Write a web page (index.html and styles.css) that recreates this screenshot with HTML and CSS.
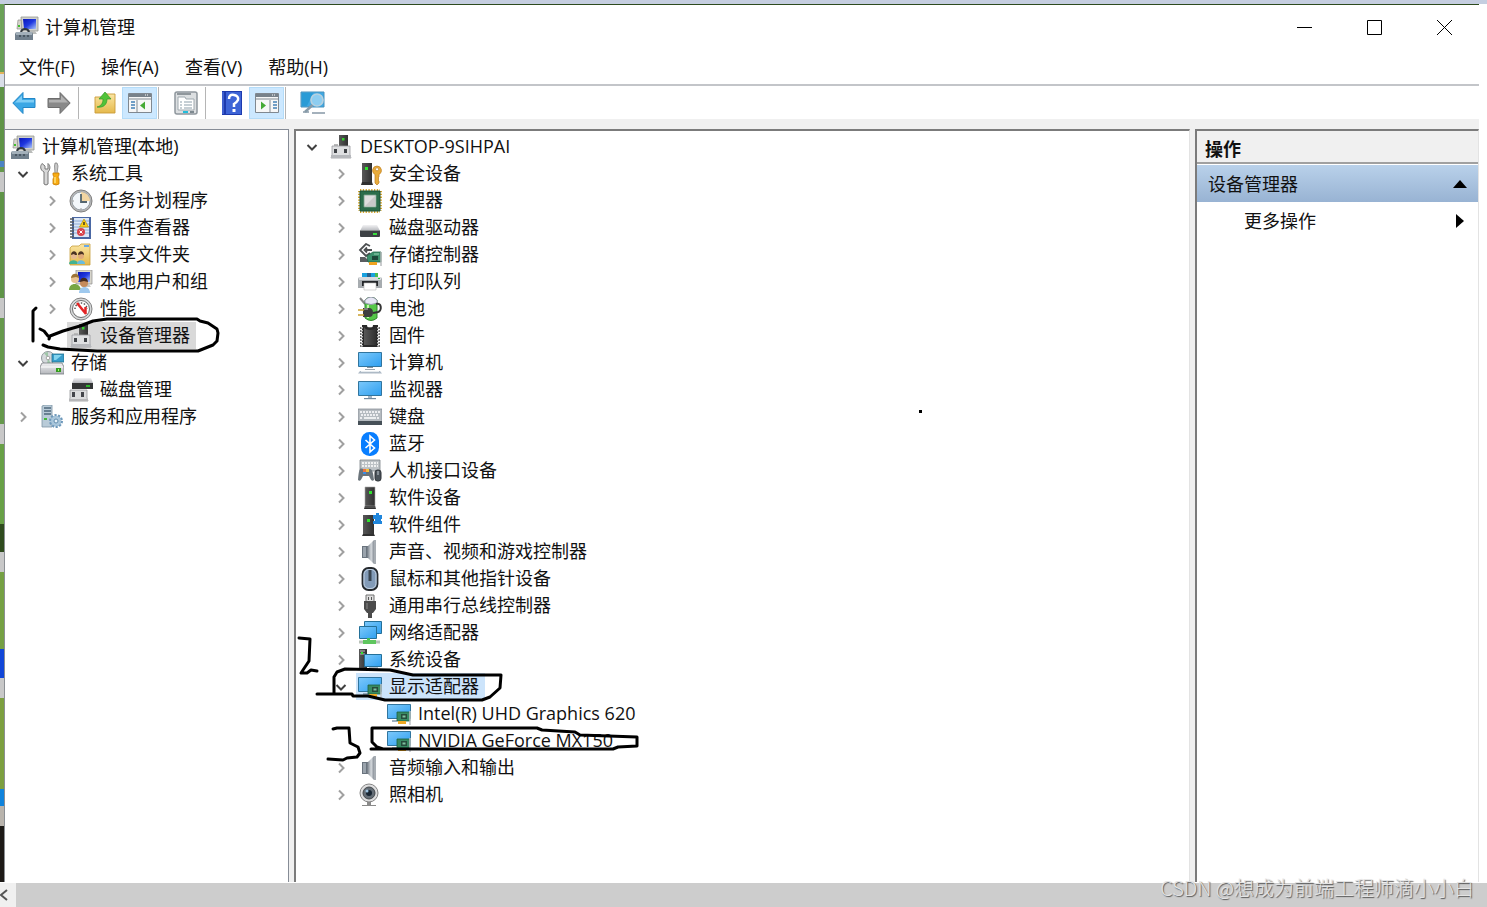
FILE: index.html
```
<!DOCTYPE html>
<html lang="zh-CN">
<head>
    <meta charset="UTF-8">
    <meta name="viewport" content="width=device-width, initial-scale=1.0">
    <title>计算机管理</title>
    <link rel="stylesheet" href="styles.css">
</head>
<body>

<!-- Icon shapes used by the toolbar and both trees -->
<svg class="sprite" aria-hidden="true">
    <defs>
        <linearGradient id="gBlue" x1="0" y1="0" x2="1" y2="1"><stop offset="0" stop-color="#7cc9fb"/><stop offset="1" stop-color="#2f9ff0"/></linearGradient>
        <linearGradient id="gSteel" x1="0" y1="0" x2="0" y2="1"><stop offset="0" stop-color="#f2f2f4"/><stop offset="1" stop-color="#b4b6bb"/></linearGradient>
        <linearGradient id="gHorn" x1="0" y1="0" x2="1" y2="0"><stop offset="0" stop-color="#6d7680"/><stop offset=".6" stop-color="#d5d9dd"/><stop offset="1" stop-color="#8a9199"/></linearGradient>
        <linearGradient id="gNavy" x1="0" y1="0" x2="1" y2="1"><stop offset="0" stop-color="#0a16b8"/><stop offset=".5" stop-color="#1f38e0"/><stop offset="1" stop-color="#a9c4fa"/></linearGradient>
        <linearGradient id="gFolder" x1="0" y1="0" x2="0" y2="1"><stop offset="0" stop-color="#fbe6a4"/><stop offset="1" stop-color="#e5b94c"/></linearGradient>
        <linearGradient id="gDark" x1="0" y1="0" x2="1" y2="0"><stop offset="0" stop-color="#585858"/><stop offset="1" stop-color="#303030"/></linearGradient>
    </defs>

    <symbol id="chevRight" viewBox="0 0 12 12"><path d="M4 1.5L8.500 6L4 10.500" fill="none" stroke="#a0a0a0" stroke-width="2"/></symbol>
    <symbol id="chevDown" viewBox="0 0 12 12"><path d="M1.500 4L6 8.500L10.500 4" fill="none" stroke="#404040" stroke-width="2"/></symbol>

    <symbol id="mgmt" viewBox="0 0 24 24">
        <path d="M3 4h4v9H2z" fill="#d6d4cc" stroke="#8f8f8a" stroke-width=".7"/><path d="M3 9h2v2H3z" fill="#3fbf2c"/>
        <path d="M6 1h17v14H7z" fill="#cfd0cd" stroke="#96978f" stroke-width=".8"/><path d="M8 3h13v10H9z" fill="url(#gNavy)"/>
        <path d="M12 15h8l2 3H12z" fill="#b9bbb9"/>
        <path d="M6 16c1-4 7-4 8 0" fill="none" stroke="#30373d" stroke-width="2"/>
        <path d="M1 16h16l1 2v6H0v-6z" fill="#71808d"/><path d="M1 16h16v3H1z" fill="#a3b0ba"/>
        <path d="M4 19h2v2H4zM8 19h2v2H8zM12 19h2v2h-2z" fill="#4a5863"/>
    </symbol>
    <symbol id="tools" viewBox="0 0 24 24">
        <path d="M2 1.500L5 4V7H8V1.500C11 4 10 8 8 10v12q-2 2-4 0V10C0 8 0 4 2 1.500z" fill="#d7d7d7" stroke="#767676"/>
        <path d="M15 1h2l1 3-1 8h-2l-.5-8z" fill="#c9c9c9" stroke="#777" stroke-width=".7"/>
        <path d="M13 11h6v2l-1 2 1 2v5q-3 2-6 0v-5l1-2-1-2z" fill="#f8ac13" stroke="#c67b04" stroke-width=".8"/><path d="M15 15v6" stroke="#ffe37c" stroke-width="1.500"/>
    </symbol>
    <symbol id="clock" viewBox="0 0 24 24">
        <circle cx="12" cy="12" r="11" fill="#b8b8b8" stroke="#808080"/><circle cx="12" cy="12" r="9" fill="#f3f7fa" stroke="#8c959d" stroke-width=".8"/>
        <path d="M12 12V3a9 9 0 0 1 9 9z" fill="#f2d5a2"/><path d="M12 5v8h6" fill="none" stroke="#53656f" stroke-width="1.800"/>
        <path d="M12 19v2M3 12h2" stroke="#999"/>
    </symbol>
    <symbol id="events" viewBox="0 0 24 24">
        <path d="M3 1h19v22H3z" fill="#4a68a4"/><path d="M5 2h15v19H5z" fill="#dbe7f7"/>
        <path d="M5 5h15M5 8h15M5 11h15M5 14h15M5 17h15" stroke="#7b9ccc" stroke-width=".8"/>
        <path d="M1 3h4M1 6h4M1 9h4M1 12h4M1 15h4M1 18h4M1 21h4" stroke="#55595f" stroke-width="1.300"/>
        <path d="M15 3l4.500 8h-9z" fill="#fbcf17" stroke="#bc9406" stroke-width=".7"/><path d="M15 6v3" stroke="#222" stroke-width="1.300"/>
        <circle cx="12" cy="16" r="4" fill="#d8444c"/><path d="M10.500 14.500l3 3m0-3l-3 3" stroke="#fff"/>
    </symbol>
    <symbol id="shared" viewBox="0 0 24 24">
        <path d="M1 5l2-2h7l2-2h9v21H1z" fill="url(#gFolder)" stroke="#c79f3c" stroke-width=".8"/><path d="M15 2h5v2h-5z" fill="#69a8e6"/>
        <path d="M0 21c0-5 9-5 9 0z" fill="#43b391"/><path d="M8 21c0-5 8-5 8 0z" fill="#68bde0"/>
        <circle cx="5" cy="13" r="3" fill="#e7ba92"/><circle cx="12" cy="13" r="3" fill="#e0aa7a"/>
        <path d="M2 12c0-5 6-5 6 0l-2 0-1-1zM9 12c0-5 6-5 6 0l-2-1z" fill="#4c3423"/>
    </symbol>
    <symbol id="users" viewBox="0 0 24 24">
        <path d="M7 0h16v14H7z" fill="#d7d5cb" stroke="#8d8d8d" stroke-width=".7"/><path d="M9 2h12v10H9z" fill="url(#gNavy)"/><path d="M12 14h8l2 3h-9z" fill="#c8c7c2"/>
        <path d="M0 20c0-8 11-8 12 0z" fill="#77a644"/><path d="M10 23c0-8 11-8 11 0z" fill="#9fc9ee"/>
        <circle cx="6" cy="9" r="4" fill="#e7c393"/><path d="M2 8c0-5 8-6 8 0l-3-1z" fill="#9d7436"/>
        <circle cx="15" cy="13" r="4" fill="#c58b5b"/><path d="M11 12c0-6 8-5 8 0l-4-1z" fill="#452b1d"/>
    </symbol>
    <symbol id="perf" viewBox="0 0 24 24">
        <circle cx="12" cy="12" r="11" fill="#d7d9da" stroke="#828282"/><circle cx="12" cy="12" r="8.500" fill="#fff" stroke="#6d6d6d"/>
        <path d="M6 12a6 6 0 0 1 12 0" fill="none" stroke="#555" stroke-width="1.500" stroke-dasharray="1.500 1.500"/>
        <path d="M8 6l9 11M16.500 10v7" fill="none" stroke="#e32526" stroke-width="2.500"/>
    </symbol>
    <symbol id="device" viewBox="0 0 24 24">
        <path d="M10 0h9v12h-9z" fill="url(#gDark)"/><path d="M13 3h2.500v2.500H13z" fill="#35d22e"/>
        <path d="M5 9h4v3H5z" fill="#b9b9b9"/><path d="M3 11h18v9l1 3H2l1-3z" fill="#dedfe1" stroke="#9a9b9e" stroke-width=".8"/><path d="M2 20h20v3H2z" fill="#b6b8bc"/>
        <path d="M5 14h3v4H5zM15 14h3v4h-3z" fill="#404347"/>
    </symbol>
    <symbol id="storage" viewBox="0 0 24 24">
        <circle cx="8" cy="7" r="6.500" fill="#d5d9dc" stroke="#92999e"/><path d="M8 7L4 2l4-1zM8 7l3 6-4 0z" fill="#9fc6a8"/><circle cx="8" cy="7" r="1.800" fill="#fff" stroke="#888" stroke-width=".7"/>
        <path d="M12 3h12v8H12z" fill="#389dcb" stroke="#23718d" stroke-width=".8"/><path d="M14 4h8l-6 5h-2z" fill="#83d4ef"/>
        <path d="M2 12h20l2 4v7H0v-7z" fill="url(#gSteel)" stroke="#777b80" stroke-width=".8"/><path d="M16 17h5v4h-5z" fill="#369a20"/><path d="M18 18h1v2h-1z" fill="#a1ff71"/>
        <path d="M1 16h22" stroke="#fff"/>
    </symbol>
    <symbol id="diskmgmt" viewBox="0 0 24 24">
        <path d="M5 0h17l2 5H3z" fill="url(#gSteel)"/><path d="M3 5h21v6H3z" fill="#343637"/><path d="M17 7h4v2h-4z" fill="#2db42c"/>
        <path d="M1 12h17v8l1 3H0l1-3z" fill="#dcddde" stroke="#96989b" stroke-width=".8"/><path d="M3 14h3v5H3zM12 14h3v5h-3z" fill="#44464b"/><path d="M0 21h19v2H0z" fill="#b7b7b9"/>
    </symbol>
    <symbol id="services" viewBox="0 0 24 24">
        <path d="M2 1l3-1h7v22H2z" fill="#b9cbd8" stroke="#7e95a5" stroke-width=".8"/><path d="M4 3h7M4 6h7M4 9h7" stroke="#4d687b" stroke-width="1.500"/><path d="M4 14h3" stroke="#43b83c" stroke-width="2"/>
        <circle cx="16" cy="16" r="5.500" fill="#9dbad2" stroke="#6f99bb" stroke-width="3" stroke-dasharray="2 1.400"/><circle cx="16" cy="16" r="5" fill="#a9c6db"/><circle cx="16" cy="16" r="2" fill="#e8f2f9" stroke="#628eae"/>
    </symbol>

    <symbol id="tower" viewBox="0 0 24 24">
        <path d="M7 1h10v19H7z" fill="url(#gDark)" stroke="#a9a9a9" stroke-width=".6"/><path d="M11 5h3v3h-3z" fill="#31e32e"/><path d="M7 20h10l1 3H6z" fill="#303030"/><path d="M6 21h12" stroke="#898989" stroke-width=".7"/>
    </symbol>
    <symbol id="security" viewBox="0 0 24 24">
        <path d="M4 1h10v19H4z" fill="url(#gDark)"/><path d="M7 5h3v3H7z" fill="#31e32e"/><path d="M4 20h10l1 3H3z" fill="#303030"/>
        <path fill-rule="evenodd" d="M19 4a4.500 4.500 0 0 1 2 8.500V15l-1 1 1 1-1 1 1 1v2l-2 2-2-2v-8.500A4.500 4.500 0 0 1 19 4zm0 1.800a1.500 1.500 0 1 0 .1 0z" fill="#e9ac3c" stroke="#bd7d1c" stroke-width=".7"/>
    </symbol>
    <symbol id="cpu" viewBox="0 0 24 24">
        <path d="M2 1h20M2 23h20" stroke="#d7a52a" stroke-width="2" stroke-dasharray="1.300 1.500"/><path d="M1 2v20M23 2v20" stroke="#d7a52a" stroke-width="2" stroke-dasharray="1.300 1.500"/>
        <path d="M2 2h20v20H2z" fill="#2b6d4b" stroke="#1c5036"/><path d="M6 6h12v12H6z" fill="#dedede" stroke="#7ca18c" stroke-width=".8"/><path d="M7 17L17 7v10z" fill="#c9c9c9"/>
    </symbol>
    <symbol id="disk" viewBox="0 0 24 24">
        <path d="M5 9h14l3 6H2z" fill="url(#gSteel)"/><path d="M2 14h20v6q0 1-1 1H3q-1 0-1-1z" fill="#3d4144"/><path d="M15 18h4" stroke="#38de3c" stroke-width="2"/><path d="M2 14.500h20" stroke="#8d9091"/>
    </symbol>
    <symbol id="storctl" viewBox="0 0 24 24">
        <path d="M12 3L8 1 2 7l6 6 4-3M8 7h6M9 4.500L6.500 7 9 9.500" fill="none" stroke="#4c4f51" stroke-width="1.800"/><path d="M2 14h5l5 5H2z" fill="#5a5d60"/>
        <path d="M9 13l6-4h8v10H10z" fill="#3b916c" stroke="#1f6547" stroke-width=".8"/><path d="M14 13h6v4h-6z" fill="#1d493a"/><path d="M16 11h5" stroke="#9ad4b5"/><path d="M11 19h8v3h-8z" fill="#f0a31f"/><path d="M23 9v14" stroke="#b7babc" stroke-width="1.500"/>
    </symbol>
    <symbol id="printer" viewBox="0 0 24 24">
        <path d="M4 3h16v5H4z" fill="#18a1df"/><path d="M9 3h4v5H9z" fill="#27608c"/><path d="M17 3h3v5h-3z" fill="#48bd4e"/>
        <path d="M1 7h22l1 2v9H0V9z" fill="#a7acb0"/><path d="M1 7h22v3H1z" fill="#d7dadd"/><path d="M4 11h16v5H4z" fill="#25282b"/><path d="M6 13h12v7H6z" fill="#fff" stroke="#bbb" stroke-width=".6"/><path d="M20 8h2v1h-2z" fill="#28d238"/>
    </symbol>
    <symbol id="battery" viewBox="0 0 24 24">
        <path d="M2 1l5 6" stroke="#858585" stroke-width="2"/><path d="M7 3q6-6 12 0v18q-6 5-12 0z" fill="#55c748" stroke="#33852e"/><path d="M7 3q6-6 12 0v3q-6 3-12 0z" fill="#e6e6f4" stroke="#8d8ca5" stroke-width=".8"/><path d="M10 8v13" stroke="#c2f4a7" stroke-width="2"/>
        <path d="M18 7c6-2 6 7 2 8l-5 1" fill="none" stroke="#343434" stroke-width="2"/><path d="M5 11h6q4 0 4 4.500T11 20H5z" fill="#3e3e3e"/><path d="M6 12h4" stroke="#bbb"/><path d="M0 13h6M0 18h6" stroke="#c99f2c" stroke-width="1.700"/>
    </symbol>
    <symbol id="firmware" viewBox="0 0 24 24">
        <path d="M2 4h20M2 7h20M2 10h20M2 13h20M2 16h20M2 19h20M2 22h20" stroke="#454545" stroke-width="1.500"/><path d="M4 1h5q0 3 3 3t3-3h5v22H4z" fill="#292929"/><path d="M6 3q1 3 6 3t6-3v18H6z" fill="url(#gDark)"/><path d="M4 3v20M20 3v20" stroke="#e2e2e2" stroke-width="1.500" stroke-dasharray="1.500 1.500"/>
    </symbol>
    <symbol id="computer" viewBox="0 0 24 24">
        <path d="M.5 1.500h23v14H.5z" fill="url(#gBlue)" stroke="#31759e"/><path d="M9 16h6v1H9z" fill="#86929d"/><path d="M7 18h10v1H7z" fill="#9aa5af"/><path d="M2 20h20l2 2.500H0z" fill="#aebac6"/><path d="M3 20.500h18" stroke="#e6ebef"/>
    </symbol>
    <symbol id="monitor" viewBox="0 0 24 24">
        <path d="M.5 3.500h23v14H.5z" fill="url(#gBlue)" stroke="#31759e"/><path d="M10 18h4v2h-4z" fill="#a3b4c3"/><path d="M6 20h12v1.200H6z" fill="#70899f"/>
    </symbol>
    <symbol id="keyboard" viewBox="0 0 24 24">
        <path d="M0 4h24v14H0z" fill="#b5bbc0" stroke="#7c858c" stroke-width=".7"/><path d="M0 16h24v4H0z" fill="#465058"/>
        <path d="M2 7h20M3 10h18M2 13h3M19 13h3" stroke="#fff" stroke-width="1.700" stroke-dasharray="2 1"/><path d="M6 13h12" stroke="#fff" stroke-width="1.500"/>
    </symbol>
    <symbol id="bluetooth" viewBox="0 0 24 24">
        <rect x="3" y="0" width="18" height="24" rx="8.500" fill="#087eff"/><path d="M7.500 8l9 8-4.500 4V4l4.500 4-9 8" fill="none" stroke="#fff" stroke-width="1.600"/>
    </symbol>
    <symbol id="hid" viewBox="0 0 24 24">
        <path d="M2 1h20v11H2z" fill="#bdc2c6" stroke="#7c8389" stroke-width=".8"/><path d="M4 4h16M4 7h16" stroke="#fff" stroke-width="1.700" stroke-dasharray="2 1"/>
        <path d="M0 21c1-12 2-12 5-11h5c4-1 5 2 6 11-2 2-3 0-5-4H5c-2 4-3 6-5 4z" fill="#6b747b"/><path d="M5 10h3v3H5z" fill="#ed7344"/><path d="M8 10h3v3H8z" fill="#f3c33f"/><path d="M5 13h3v2H5z" fill="#398ee7"/>
        <rect x="17" y="11" width="6" height="11" rx="2.500" fill="#4b535a" stroke="#2c3136"/><path d="M20 12v4" stroke="#c6ced5"/>
    </symbol>
    <symbol id="component" viewBox="0 0 24 24">
        <path d="M5 2h11v19H5z" fill="url(#gDark)"/><path d="M9 6h3v3H9z" fill="#31e32e"/><path d="M5 21h11l1 2H4z" fill="#303030"/>
        <path d="M15 2h3V0h3v2h3v4h-1v2h1v3h-9V8h2V6h-2z" fill="#2086dc"/>
    </symbol>
    <symbol id="speaker" viewBox="0 0 24 24">
        <path d="M4 6h6v12H4z" fill="#69737d"/><path d="M5 7h3v10H5z" fill="#9aa3ac"/><path d="M9 7L16 0v24l-7-7z" fill="url(#gHorn)"/><path d="M16 0h2v24h-2z" fill="#a7adb3"/>
    </symbol>
    <symbol id="mouse" viewBox="0 0 24 24">
        <rect x="4.500" y="1" width="15" height="22" rx="6" fill="#829bb8" stroke="#25292d" stroke-width="1.800"/><rect x="6" y="2.500" width="12" height="19" rx="5" fill="none" stroke="#c3d2e2"/><path d="M12 3v11" stroke="#394550" stroke-width="3"/>
    </symbol>
    <symbol id="usb" viewBox="0 0 24 24">
        <path d="M8 1h8v7H8z" fill="#dedede" stroke="#717171"/><path d="M10 3h1v3h-1zM13 3h1v3h-1z" fill="#555"/><path d="M6 7h12v8l-3 4h-1v5h-4v-5H9l-3-4z" fill="#4b4b4b"/><path d="M9 9v6" stroke="#888"/>
    </symbol>
    <symbol id="network" viewBox="0 0 24 24">
        <path d="M6.500.5h17v12h-17z" fill="url(#gBlue)" stroke="#247099"/><path d="M1.500 5.500h17v12h-17z" fill="url(#gBlue)" stroke="#247099"/>
        <path d="M9 17h3v3H9z" fill="#43bd57"/><path d="M5 19h13v4H5z" fill="#5fc65e"/><path d="M1 21h4M18 21h4" stroke="#b9c2b9" stroke-width="3"/>
    </symbol>
    <symbol id="system" viewBox="0 0 24 24">
        <path d="M1 1h8v20H1z" fill="url(#gDark)"/><path d="M2 3h5M2 6h5" stroke="#bbb"/><path d="M3 4h2v2H3z" fill="#31e32e"/><path d="M6.500 6.500h17v12h-17z" fill="url(#gBlue)" stroke="#247099"/><path d="M11 20h9" stroke="#98a6b3" stroke-width="1.500"/>
    </symbol>
    <symbol id="display" viewBox="0 0 24 24">
        <path d="M.5 2.500h23v14H.5z" fill="url(#gBlue)" stroke="#31759e"/><path d="M5 19h5" stroke="#7e95a8" stroke-width="1.500"/>
        <path d="M10 10h13v9H10z" fill="#398a62" stroke="#1a6040" stroke-width=".8"/><path d="M14 12h6v5h-6z" fill="#264b3b"/><path d="M15.500 13.500h3v2h-3z" fill="#7fc09e"/><path d="M11 19h8v3h-8z" fill="#f0aa24"/><path d="M23 9v14" stroke="#c1c5c8" stroke-width="1.500"/>
    </symbol>
    <symbol id="camera" viewBox="0 0 24 24">
        <path d="M9 18h4v4h5v1H4v-1h5z" fill="#8a8a8a"/><circle cx="11" cy="10" r="9" fill="#dededf" stroke="#858585"/><circle cx="11" cy="10" r="6" fill="#646d76" stroke="#414549"/><circle cx="11" cy="10" r="3" fill="#182532"/><circle cx="9" cy="8" r="1.500" fill="#9cc1df"/>
    </symbol>

    <symbol id="back" viewBox="0 0 24 24"><path d="M.8 12L11 1.500v6h12v9H11v6z" fill="#3ba7e5" stroke="#2387c7"/><path d="M3 11.500L10 4.500V9h12v2.500z" fill="#7fcdf5"/></symbol>
    <symbol id="forward" viewBox="0 0 24 24"><path d="M23.200 12L13 1.500v6H1v9h12v6z" fill="#898989" stroke="#6d6d6d"/><path d="M21 11.500l-7-7V9H2v2.500z" fill="#b2b2b2"/></symbol>
    <symbol id="upfolder" viewBox="0 0 24 24">
        <path d="M2 6h8l2-3h10v19H2z" fill="url(#gFolder)" stroke="#c99b38" stroke-width=".9"/><path d="M4 16C9 15 10 11 10 8H6l6-7 6 7h-4c0 6-4 9-10 8z" fill="#52c338" stroke="#32982c" stroke-width=".7"/>
    </symbol>
    <symbol id="treepane" viewBox="0 0 24 24">
        <path d="M.5 2.500h23v19H.5z" fill="#f7f7f7" stroke="#808890"/><path d="M1 3h22v3H1z" fill="#78828b"/><path d="M17 4h4" stroke="#fff" stroke-dasharray="1 1"/><path d="M1 8h22M9 9v12" stroke="#818b93"/><path d="M3 11h4M3 14h4M3 17h4" stroke="#4481b7" stroke-width="1.500"/><path d="M12 14.500l5-4v8z" fill="#46aa35"/>
    </symbol>
    <symbol id="actionpane" viewBox="0 0 24 24">
        <path d="M.5 2.500h23v19H.5z" fill="#f7f7f7" stroke="#808890"/><path d="M1 3h22v3H1z" fill="#78828b"/><path d="M17 4h4" stroke="#fff" stroke-dasharray="1 1"/><path d="M1 8h22M15 9v12" stroke="#818b93"/><path d="M18 11h4M18 14h4M18 17h4" stroke="#4481b7" stroke-width="1.500"/><path d="M11 14.500l-5-4v8z" fill="#46aa35"/>
    </symbol>
    <symbol id="props" viewBox="0 0 24 24">
        <rect x="1" y="1" width="22" height="22" rx="2" fill="#dcdfe1" stroke="#8f979d" stroke-width="1.500"/><path d="M3 3h14" stroke="#777f85" stroke-width="1.500"/><path d="M4 8V6h7l1 2h8v11H4z" fill="#fff" stroke="#9fa8ae"/><path d="M6 11h2M10 11h8M6 14h2M10 14h8M6 17h2M10 17h8" stroke="#8ea0ac" stroke-width="1.200"/><path d="M9 20h5v2H9z" fill="#23bddb"/><path d="M16 20h4v2h-4z" fill="#7d8990"/>
    </symbol>
    <symbol id="help" viewBox="0 0 24 24">
        <path d="M2 0h20v24H2z" fill="#1d3aae"/><path d="M6 1h15v22H6z" fill="#3d64d6"/><path d="M3 1v22" stroke="#6184ee"/><path d="M9 8q0-5 5-4t4 5q-1 2-4 4v3" fill="none" stroke="#fff" stroke-width="2.500"/><path d="M12.500 18h3v3h-3z" fill="#fff"/>
    </symbol>
    <symbol id="scan" viewBox="0 0 26 24">
        <path d="M1 1h23v15H1z" fill="#3fa8e3" stroke="#4991bb"/><path d="M2 2h11L7 15H2z" fill="#299bd6"/><path d="M3 21h6M12 22h13" stroke="#8798a7" stroke-width="1.700"/>
        <circle cx="17" cy="9" r="6" fill="#8dcdf0" stroke="#b7d1df" stroke-width="1.700"/><path d="M12.500 14L5 21" stroke="#879ba9" stroke-width="2.500"/>
    </symbol>
</svg>

<div class="backdrop">
    <div class="wallpaper"></div>

    <div class="window">
        <header class="titlebar">
            <svg class="icon"><use href="#mgmt"/></svg>
            <h1>计算机管理</h1>
            <div class="controls">
                <button aria-label="最小化"><svg viewBox="0 0 15 15"><path d="M0 7.500h15"/></svg></button>
                <button aria-label="最大化"><svg viewBox="0 0 15 15"><path d="M.5.5h14v14H.5z"/></svg></button>
                <button aria-label="关闭"><svg viewBox="0 0 15 15"><path d="M0 0l15 15M15 0L0 15"/></svg></button>
            </div>
        </header>

        <nav class="menubar">
            <button>文件(F)</button>
            <button>操作(A)</button>
            <button>查看(V)</button>
            <button>帮助(H)</button>
        </nav>

        <div class="toolbar">
            <button aria-label="后退"><svg class="icon"><use href="#back"/></svg></button>
            <button aria-label="前进"><svg class="icon"><use href="#forward"/></svg></button>
            <span class="sep"></span>
            <button aria-label="上移一级"><svg class="icon"><use href="#upfolder"/></svg></button>
            <button class="on" aria-label="显示控制台树"><svg class="icon"><use href="#treepane"/></svg></button>
            <span class="sep"></span>
            <button aria-label="属性"><svg class="icon"><use href="#props"/></svg></button>
            <span class="sep"></span>
            <button aria-label="帮助"><svg class="icon"><use href="#help"/></svg></button>
            <button class="on" aria-label="显示操作窗格"><svg class="icon"><use href="#actionpane"/></svg></button>
            <span class="sep"></span>
            <button aria-label="扫描硬件改动"><svg class="icon wide"><use href="#scan"/></svg></button>
        </div>

        <main class="panes">
            <section class="pane console">
                <ul class="tree">
                    <li>
                        <div class="row"><a href="#"><svg class="icon"><use href="#mgmt"/></svg>计算机管理(本地)</a></div>
                        <ul class="flush">
                            <li>
                                <div class="row"><button aria-label="折叠"><svg><use href="#chevDown"/></svg></button><a href="#"><svg class="icon"><use href="#tools"/></svg>系统工具</a></div>
                                <ul>
                                    <li class="row"><button aria-label="展开"><svg><use href="#chevRight"/></svg></button><a href="#"><svg class="icon"><use href="#clock"/></svg>任务计划程序</a></li>
                                    <li class="row"><button aria-label="展开"><svg><use href="#chevRight"/></svg></button><a href="#"><svg class="icon"><use href="#events"/></svg>事件查看器</a></li>
                                    <li class="row"><button aria-label="展开"><svg><use href="#chevRight"/></svg></button><a href="#"><svg class="icon"><use href="#shared"/></svg>共享文件夹</a></li>
                                    <li class="row"><button aria-label="展开"><svg><use href="#chevRight"/></svg></button><a href="#"><svg class="icon"><use href="#users"/></svg>本地用户和组</a></li>
                                    <li class="row"><button aria-label="展开"><svg><use href="#chevRight"/></svg></button><a href="#"><svg class="icon"><use href="#perf"/></svg>性能</a></li>
                                    <li class="row leaf"><a href="#" class="current"><svg class="icon"><use href="#device"/></svg>设备管理器</a></li>
                                </ul>
                            </li>
                            <li>
                                <div class="row"><button aria-label="折叠"><svg><use href="#chevDown"/></svg></button><a href="#"><svg class="icon"><use href="#storage"/></svg>存储</a></div>
                                <ul>
                                    <li class="row leaf"><a href="#"><svg class="icon"><use href="#diskmgmt"/></svg>磁盘管理</a></li>
                                </ul>
                            </li>
                            <li class="row"><button aria-label="展开"><svg><use href="#chevRight"/></svg></button><a href="#"><svg class="icon"><use href="#services"/></svg>服务和应用程序</a></li>
                        </ul>
                    </li>
                </ul>
            </section>

            <section class="pane devices">
                <ul class="tree">
                    <li>
                        <div class="row"><button aria-label="折叠"><svg><use href="#chevDown"/></svg></button><a href="#"><svg class="icon"><use href="#device"/></svg>DESKTOP-9SIHPAI</a></div>
                        <ul>
                            <li class="row"><button aria-label="展开"><svg><use href="#chevRight"/></svg></button><a href="#"><svg class="icon"><use href="#security"/></svg>安全设备</a></li>
                            <li class="row"><button aria-label="展开"><svg><use href="#chevRight"/></svg></button><a href="#"><svg class="icon"><use href="#cpu"/></svg>处理器</a></li>
                            <li class="row"><button aria-label="展开"><svg><use href="#chevRight"/></svg></button><a href="#"><svg class="icon"><use href="#disk"/></svg>磁盘驱动器</a></li>
                            <li class="row"><button aria-label="展开"><svg><use href="#chevRight"/></svg></button><a href="#"><svg class="icon"><use href="#storctl"/></svg>存储控制器</a></li>
                            <li class="row"><button aria-label="展开"><svg><use href="#chevRight"/></svg></button><a href="#"><svg class="icon"><use href="#printer"/></svg>打印队列</a></li>
                            <li class="row"><button aria-label="展开"><svg><use href="#chevRight"/></svg></button><a href="#"><svg class="icon"><use href="#battery"/></svg>电池</a></li>
                            <li class="row"><button aria-label="展开"><svg><use href="#chevRight"/></svg></button><a href="#"><svg class="icon"><use href="#firmware"/></svg>固件</a></li>
                            <li class="row"><button aria-label="展开"><svg><use href="#chevRight"/></svg></button><a href="#"><svg class="icon"><use href="#computer"/></svg>计算机</a></li>
                            <li class="row"><button aria-label="展开"><svg><use href="#chevRight"/></svg></button><a href="#"><svg class="icon"><use href="#monitor"/></svg>监视器</a></li>
                            <li class="row"><button aria-label="展开"><svg><use href="#chevRight"/></svg></button><a href="#"><svg class="icon"><use href="#keyboard"/></svg>键盘</a></li>
                            <li class="row"><button aria-label="展开"><svg><use href="#chevRight"/></svg></button><a href="#"><svg class="icon"><use href="#bluetooth"/></svg>蓝牙</a></li>
                            <li class="row"><button aria-label="展开"><svg><use href="#chevRight"/></svg></button><a href="#"><svg class="icon"><use href="#hid"/></svg>人机接口设备</a></li>
                            <li class="row"><button aria-label="展开"><svg><use href="#chevRight"/></svg></button><a href="#"><svg class="icon"><use href="#tower"/></svg>软件设备</a></li>
                            <li class="row"><button aria-label="展开"><svg><use href="#chevRight"/></svg></button><a href="#"><svg class="icon"><use href="#component"/></svg>软件组件</a></li>
                            <li class="row"><button aria-label="展开"><svg><use href="#chevRight"/></svg></button><a href="#"><svg class="icon"><use href="#speaker"/></svg>声音、视频和游戏控制器</a></li>
                            <li class="row"><button aria-label="展开"><svg><use href="#chevRight"/></svg></button><a href="#"><svg class="icon"><use href="#mouse"/></svg>鼠标和其他指针设备</a></li>
                            <li class="row"><button aria-label="展开"><svg><use href="#chevRight"/></svg></button><a href="#"><svg class="icon"><use href="#usb"/></svg>通用串行总线控制器</a></li>
                            <li class="row"><button aria-label="展开"><svg><use href="#chevRight"/></svg></button><a href="#"><svg class="icon"><use href="#network"/></svg>网络适配器</a></li>
                            <li class="row"><button aria-label="展开"><svg><use href="#chevRight"/></svg></button><a href="#"><svg class="icon"><use href="#system"/></svg>系统设备</a></li>
                            <li>
                                <div class="row"><button aria-label="折叠"><svg><use href="#chevDown"/></svg></button><a href="#" class="selected"><svg class="icon"><use href="#display"/></svg>显示适配器</a></div>
                                <ul>
                                    <li class="row leaf"><a href="#"><svg class="icon"><use href="#display"/></svg>Intel(R) UHD Graphics 620</a></li>
                                    <li class="row leaf"><a href="#"><svg class="icon"><use href="#display"/></svg>NVIDIA GeForce MX150</a></li>
                                </ul>
                            </li>
                            <li class="row"><button aria-label="展开"><svg><use href="#chevRight"/></svg></button><a href="#"><svg class="icon"><use href="#speaker"/></svg>音频输入和输出</a></li>
                            <li class="row"><button aria-label="展开"><svg><use href="#chevRight"/></svg></button><a href="#"><svg class="icon"><use href="#camera"/></svg>照相机</a></li>
                        </ul>
                    </li>
                </ul>
            </section>

            <aside class="pane actions">
                <h2>操作</h2>
                <button class="group">设备管理器<svg viewBox="0 0 14 14"><path d="M0 10L7 2l7 8z"/></svg></button>
                <button class="more">更多操作<svg viewBox="0 0 14 14"><path d="M3 0l8 7-8 7z"/></svg></button>
            </aside>
        </main>
    </div>
</div>

<footer class="scrollbar">
    <button aria-label="向左滚动"><svg viewBox="0 0 8 12"><path d="M7 1L1 6l6 5"/></svg></button>
</footer>

<!-- Pen marks over the steps -->
<svg class="ink" viewBox="0 0 960 820" aria-hidden="true">
    <path d="M36 308L33 311V341"/>
    <path d="M40 329L44 331L48 336M49 339L50 336L63 331L80 326L93 321L107 319H197L200 321L208 323L217 329L218 333L217 341L213 345L198 351H97L60 349L48 347L43 345"/>
    <path d="M299 638L310 639L309 661L301 673H307L311 670L317 671"/>
    <path d="M317 694H352L353 696H368L385 700H482L490 697L500 688L501 675H413L390 670L345 669L337 672L334 677V693"/>
    <path d="M333 729L337 728H349L350 743L358 747L360 753L357 757L347 758L343 760L328 759"/>
    <path d="M371 749H613L618 747L637 746V737L580 735L575 732L542 730L537 728H372V742L377 747L383 749"/>
    <path class="dot" d="M919 410h3v3h-3z"/>
</svg>
<div class="watermark">CSDN @想成为前端工程师滴小小白</div>

</body>
</html>
```
FILE: styles.css
```
* {
    box-sizing: border-box;
}
body {
    margin: 0;
    height: 100vh;
    display: flex;
    flex-direction: column;
    position: relative;
    overflow: hidden;
    background-color: #fff;
    border-top: 4px solid #c5cee0;
    color: #111;
    font-family: "Open Sans", "Noto Sans CJK SC", sans-serif;
    font-size: 18px;
    line-height: 27px;
}
button {
    font: inherit;
    color: inherit;
    background: none;
    border: none;
    padding: 0;
    cursor: pointer;
}
a {
    color: inherit;
    text-decoration: none;
}
ul {
    list-style: none;
    margin: 0;
    padding: 0;
}
.sprite {
    position: absolute;
    width: 0;
    height: 0;
}
.icon {
    width: 24px;
    height: 24px;
    flex: none;
}
.icon.wide {
    width: 26px;
}

.backdrop {
    flex: 1;
    min-height: 0;
    display: flex;
    padding-right: 8px;
    padding-bottom: 1px;
}
/* Sliver of desktop left of the window */
.wallpaper {
    width: 4px;
    background: linear-gradient(#6aa157 0 68px, #e3b35a 68px 70px, #d9dee8 70px 83px, #5f9447 83px 157px, #4b83c4 157px 163px, #66994c 163px 168px, #c8c8c8 168px 188px, #5f9447 188px 294px, #c8c8c8 294px 314px, #66994c 314px 420px, #c8c8c8 420px 440px, #68a046 440px 520px, #2f4b1e 520px 548px, #c8c8c8 548px 568px, #75a043 568px 645px, #1146d8 645px 674px, #c8c8c8 674px 694px, #7c9f3f 694px 785px, #0f83dc 785px 802px, #b9b4ad 802px 822px, #1d1a17 822px);
}

.window {
    flex: 1;
    min-width: 0;
    display: flex;
    flex-direction: column;
    border-top: 1px solid #2d4a1e;
    border-left: 1px solid #8b8f94;
    background-color: #fff;
}
.titlebar {
    display: flex;
    align-items: center;
    gap: 6px;
    height: 45px;
    padding-left: 10px;
}
.titlebar h1 {
    margin: 0;
    font-size: 18px;
    font-weight: normal;
}
.controls {
    display: flex;
    align-self: stretch;
    margin-left: auto;
}
.controls button {
    display: flex;
    align-items: center;
    justify-content: center;
    width: 70px;
}
.controls svg {
    width: 15px;
    height: 15px;
    fill: none;
    stroke: #000;
}
.menubar {
    display: flex;
    gap: 26px;
    height: 36px;
    padding: 1px 0 0 14px;
    border-bottom: 2px solid #c3c5c9;
}

.toolbar {
    display: flex;
    align-items: stretch;
    height: 33px;
    padding: 1px 0 0 1px;
}
.toolbar button {
    display: flex;
    align-items: center;
    justify-content: center;
    width: 35px;
}
.toolbar .on {
    background-color: #cce8ff;
    border: 1px solid #b4dcf9;
}
.sep {
    width: 1px;
    margin: 0 8px 0 2px;
    background-color: #b5b5b5;
}
.toolbar .on + .sep {
    margin: 0 9px 0 1px;
}

.panes {
    flex: 1;
    min-height: 0;
    display: grid;
    grid-template-columns: 284px 1fr 284px;
    gap: 5px;
    padding-top: 10px;
    background-color: #f0f0f0;
}
.pane {
    background-color: #fff;
    overflow: hidden;
}
.console {
    border: 1px solid #868c96;
    border-width: 1px 1px 0 0;
    padding: 3px 0 0 4px;
}
.devices,
.actions {
    border-top: 2px solid #7b7b7b;
    border-left: 2px solid #7b7b7b;
    border-right: 1px solid #e3e3e3;
}
.devices {
    padding: 2px 0 0 2px;
}

.tree ul {
    padding-left: 29px;
}
.tree .flush {
    padding-left: 0;
}
.row {
    display: flex;
    height: 27px;
}
.row button {
    display: flex;
    align-items: center;
    justify-content: center;
    width: 29px;
    padding-right: 2px;
}
.row button svg {
    width: 12px;
    height: 12px;
}
.row a {
    display: flex;
    align-items: center;
    gap: 7px;
    padding: 0 6px 0 2px;
    white-space: nowrap;
}
.leaf {
    padding-left: 29px;
}
.current {
    background-color: #d9d9d9;
}
.selected {
    background-color: #cce4fb;
}

.actions {
    display: flex;
    flex-direction: column;
}
.actions h2 {
    margin: 0;
    height: 33px;
    padding: 5px 8px 0;
    background-color: #f0f0f0;
    border-bottom: 2px solid #a0a0a0;
    font-size: 18px;
}
.actions button {
    display: flex;
    align-items: center;
    justify-content: space-between;
    height: 38px;
    padding: 2px 11px 0;
}
.actions svg {
    width: 14px;
    height: 14px;
}
.actions .group {
    background: linear-gradient(#b9d1ea, #98b3d3);
    border-top: 1px solid #fff;
}
.actions .more {
    height: 36px;
    padding-left: 47px;
}

.scrollbar {
    display: flex;
    height: 24px;
    background-color: #cdcdcd;
}
.scrollbar button {
    width: 16px;
    background-color: #f0f0f0;
    text-align: left;
}
.scrollbar svg {
    display: block;
    width: 8px;
    height: 12px;
    fill: none;
    stroke: #555;
    stroke-width: 2;
}

.ink {
    position: absolute;
    top: -4px;
    left: 0;
    width: 960px;
    height: 820px;
    pointer-events: none;
    fill: none;
    stroke: #000;
    stroke-width: 3;
    stroke-linecap: round;
    stroke-linejoin: round;
}
.ink .dot {
    fill: #000;
    stroke: none;
}
.watermark {
    position: absolute;
    right: 13px;
    bottom: 6px;
    color: #e4e4e4;
    font-family: "Noto Sans CJK SC", sans-serif;
    font-size: 20px;
    font-weight: 300;
    text-shadow: 1px 1px 1px #555;
}
```
